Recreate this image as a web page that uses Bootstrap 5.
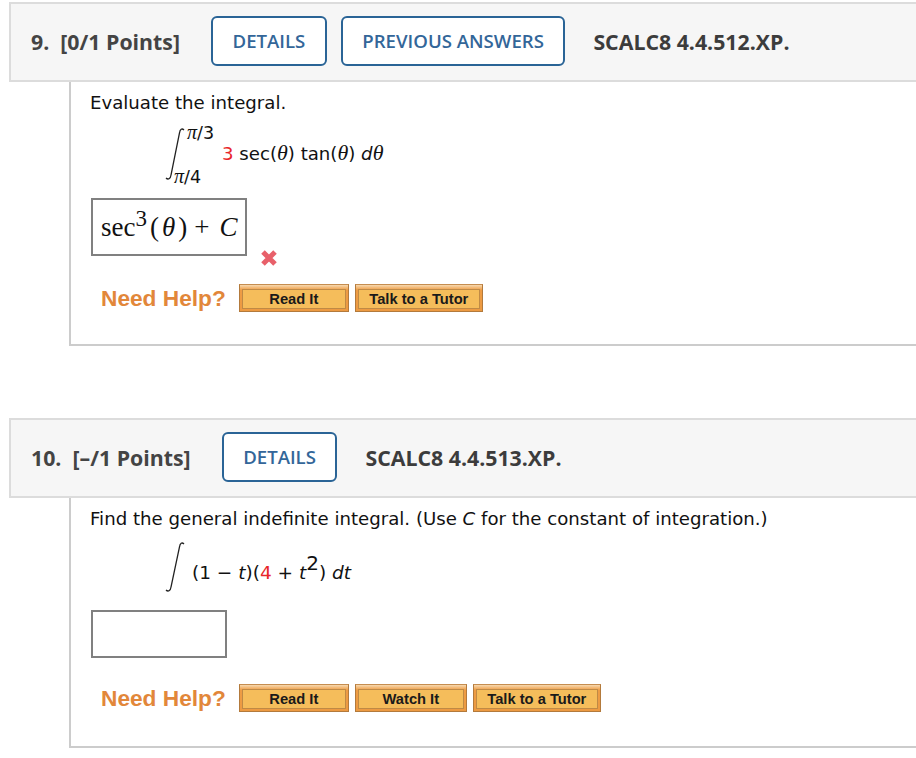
<!DOCTYPE html>
<html lang="en">
<head>
  <meta charset="UTF-8" />
  <meta name="viewport" content="width=device-width, initial-scale=1" />
  <title>Questions</title>
  <link href="https://cdn.jsdelivr.net/npm/bootstrap@5.3.3/dist/css/bootstrap.min.css" rel="stylesheet">
  <style>
    body {
      background-color: #fff;
      color: #111;
      font-family: "DejaVu Sans", sans-serif;
      font-size: 18.15px;
      padding-top: 2px;
      overflow: hidden;
    }

    .q-head {
      height: 80px;
      margin-left: 9px;
      padding-left: 20px;
      background-color: #f6f6f6;
      border: 2px solid #dcdcdc;
      border-right: 0;
      font-family: "Open Sans", sans-serif;
      color: #444;
      font-weight: 700;
      font-size: 21.3px;
    }

    .q-next {
      margin-top: 72px;
    }

    .q-points {
      white-space: pre;
      margin-right: 31px;
    }

    .q-btn {
      height: 50px;
      margin-bottom: 2px;
      padding: 0 19.5px;
      border: 2px solid #2a6496;
      border-radius: 6px;
      color: #336699;
      background: #fff;
      font-weight: 600;
      font-size: 18.6px;
      line-height: 44px;
    }

    .q-btn-gap {
      margin-right: 14px;
    }

    .q-code {
      color: #3c3c3c;
      margin-left: 28px;
    }

    .q-body {
      margin-left: 69px;
      padding-left: 19px;
      border-left: 2px solid #ccc;
      border-bottom: 2px solid #ccc;
    }

    .q-text {
      height: 31px;
      line-height: 20px;
      padding-top: 11px;
    }

    .math-row {
      margin-left: 75px;
      margin-top: 9px;
    }

    .math-row-b {
      margin-top: 13px;
    }

    .limits {
      font-size: 17.5px;
      line-height: 20px;
      width: 48px;
      margin-left: -11px;
    }

    .limit-line {
      height: 20px;
    }

    .limit-top {
      padding-left: 13px;
      margin-bottom: 24px;
    }

    .pi {
      font-family: "Liberation Serif", serif;
      font-style: italic;
      font-size: 20px;
    }

    .var {
      font-family: "Liberation Serif", serif;
      font-style: italic;
      font-size: 22px;
      line-height: 1;
    }

    .ital {
      font-style: italic;
    }

    .num-red {
      color: #e8262a;
    }

    .answer-row {
      margin-top: 12px;
    }

    .answer-box {
      height: 58px;
      width: 156px;
      margin-left: 1px;
      padding-left: 8px;
      background: #fff;
      border: 2px solid #808080;
      font-family: "Liberation Serif", serif;
      font-size: 27px;
    }

    .answer-box sup {
      font-size: 23px;
      top: -10px;
      margin-right: 3px;
    }

    .answer-box i {
      margin: 0 3px;
    }

    .answer-empty {
      width: 136px;
      height: 48px;
      margin-top: 18px;
    }

    .plus {
      margin: 0 7px;
    }

    .wrong-mark {
      margin-left: 12px;
      margin-top: 50px;
    }

    .help-row {
      margin-top: 16px;
      padding-bottom: 32px;
    }

    .help-row-b {
      margin-top: 26px;
      padding-bottom: 34px;
    }

    .need-help {
      font-family: "Liberation Sans", sans-serif;
      font-weight: 700;
      font-size: 22.7px;
      line-height: 28px;
      color: #e2873a;
      margin-left: 11px;
      margin-right: 13px;
    }

    .help-btn {
      height: 28px;
      min-width: 110px;
      padding: 2px;
      border: 1px solid #b37a3c;
      border-top-color: #c58d50;
      border-radius: 0;
      background: linear-gradient(#f7d9b0 0, #ee9c44 5px, #ec9a42 100%);
      font-family: "Liberation Sans", sans-serif;
      font-weight: 700;
      font-size: 14.7px;
      line-height: 18px;
      color: #1a1a1a;
      margin-right: 6px;
    }

    .help-btn-wide {
      min-width: 112px;
    }

    .help-btn span {
      display: block;
      height: 20px;
      margin-top: 2px;
      padding: 0 10.5px;
      background: #f5bd5b;
      border: 1px solid #c08a45;
      white-space: nowrap;
    }

    .int-text {
      padding-top: 12px;
      line-height: 24px;
      margin-left: 7px;
      font-size: 18.5px;
    }

    .int-text sup {
      font-size: 20px;
      top: -0.45em;
    }
  </style>
</head>
<body>

<!-- Question 9 -->
<div class="q-head d-flex align-items-center">
  <div class="q-points">9.  [0/1 Points]</div>
  <button class="btn q-btn q-btn-gap">DETAILS</button>
  <button class="btn q-btn">PREVIOUS ANSWERS</button>
  <div class="q-code">SCALC8 4.4.512.XP.</div>
</div>
<div class="q-body">
  <div class="q-text">Evaluate the integral.</div>
  <div class="math-row d-flex align-items-center">
    <svg width="20" height="52" viewBox="0 0 20 52" fill="none" stroke="#222" stroke-width="1.3"><path d="M19 2c-2-2-4-1-4.500 3L6 47c-.5 4-3 5-5 3"/></svg>
    <div class="limits">
      <div class="limit-line limit-top"><span class="pi">π</span>/3</div>
      <div class="limit-line"><span class="pi">π</span>/4</div>
    </div>
    <div><span class="num-red">3</span> sec(<span class="var">θ</span>) tan(<span class="var">θ</span>) <span class="ital">d</span><span class="var">θ</span></div>
  </div>
  <div class="answer-row d-flex align-items-start">
    <div class="answer-box d-flex align-items-center"><span>sec<sup>3</sup>(<i>θ</i>)<span class="plus">+</span><i>C</i></span></div>
    <svg class="wrong-mark" width="20" height="20" viewBox="0 0 20 20"><path d="M4 4l12 12M16 4L4 16" stroke="#e8606a" stroke-width="5"/></svg>
  </div>
  <div class="help-row d-flex align-items-center">
    <span class="need-help">Need Help?</span>
    <button class="btn help-btn"><span>Read It</span></button>
    <button class="btn help-btn"><span>Talk to a Tutor</span></button>
  </div>
</div>

<!-- Question 10 -->
<div class="q-head q-next d-flex align-items-center">
  <div class="q-points">10.  [–/1 Points]</div>
  <button class="btn q-btn">DETAILS</button>
  <div class="q-code">SCALC8 4.4.513.XP.</div>
</div>
<div class="q-body">
  <div class="q-text">Find the general indefinite integral. (Use <span class="ital">C</span> for the constant of integration.)</div>
  <div class="math-row math-row-b d-flex align-items-center">
    <svg width="20" height="50" viewBox="0 0 20 50" fill="none" stroke="#222" stroke-width="1.3"><path d="M19 2c-2-2-4-1-4.500 3L6 45c-.5 4-3 5-5 3"/></svg>
    <div class="int-text">(1 − <span class="ital">t</span>)(<span class="num-red">4</span> + <span class="ital">t</span><sup>2</sup>) <span class="ital">dt</span></div>
  </div>
  <div class="answer-box answer-empty"></div>
  <div class="help-row-b d-flex align-items-center">
    <span class="need-help">Need Help?</span>
    <button class="btn help-btn"><span>Read It</span></button>
    <button class="btn help-btn help-btn-wide"><span>Watch It</span></button>
    <button class="btn help-btn"><span>Talk to a Tutor</span></button>
  </div>
</div>

</body>
</html>
